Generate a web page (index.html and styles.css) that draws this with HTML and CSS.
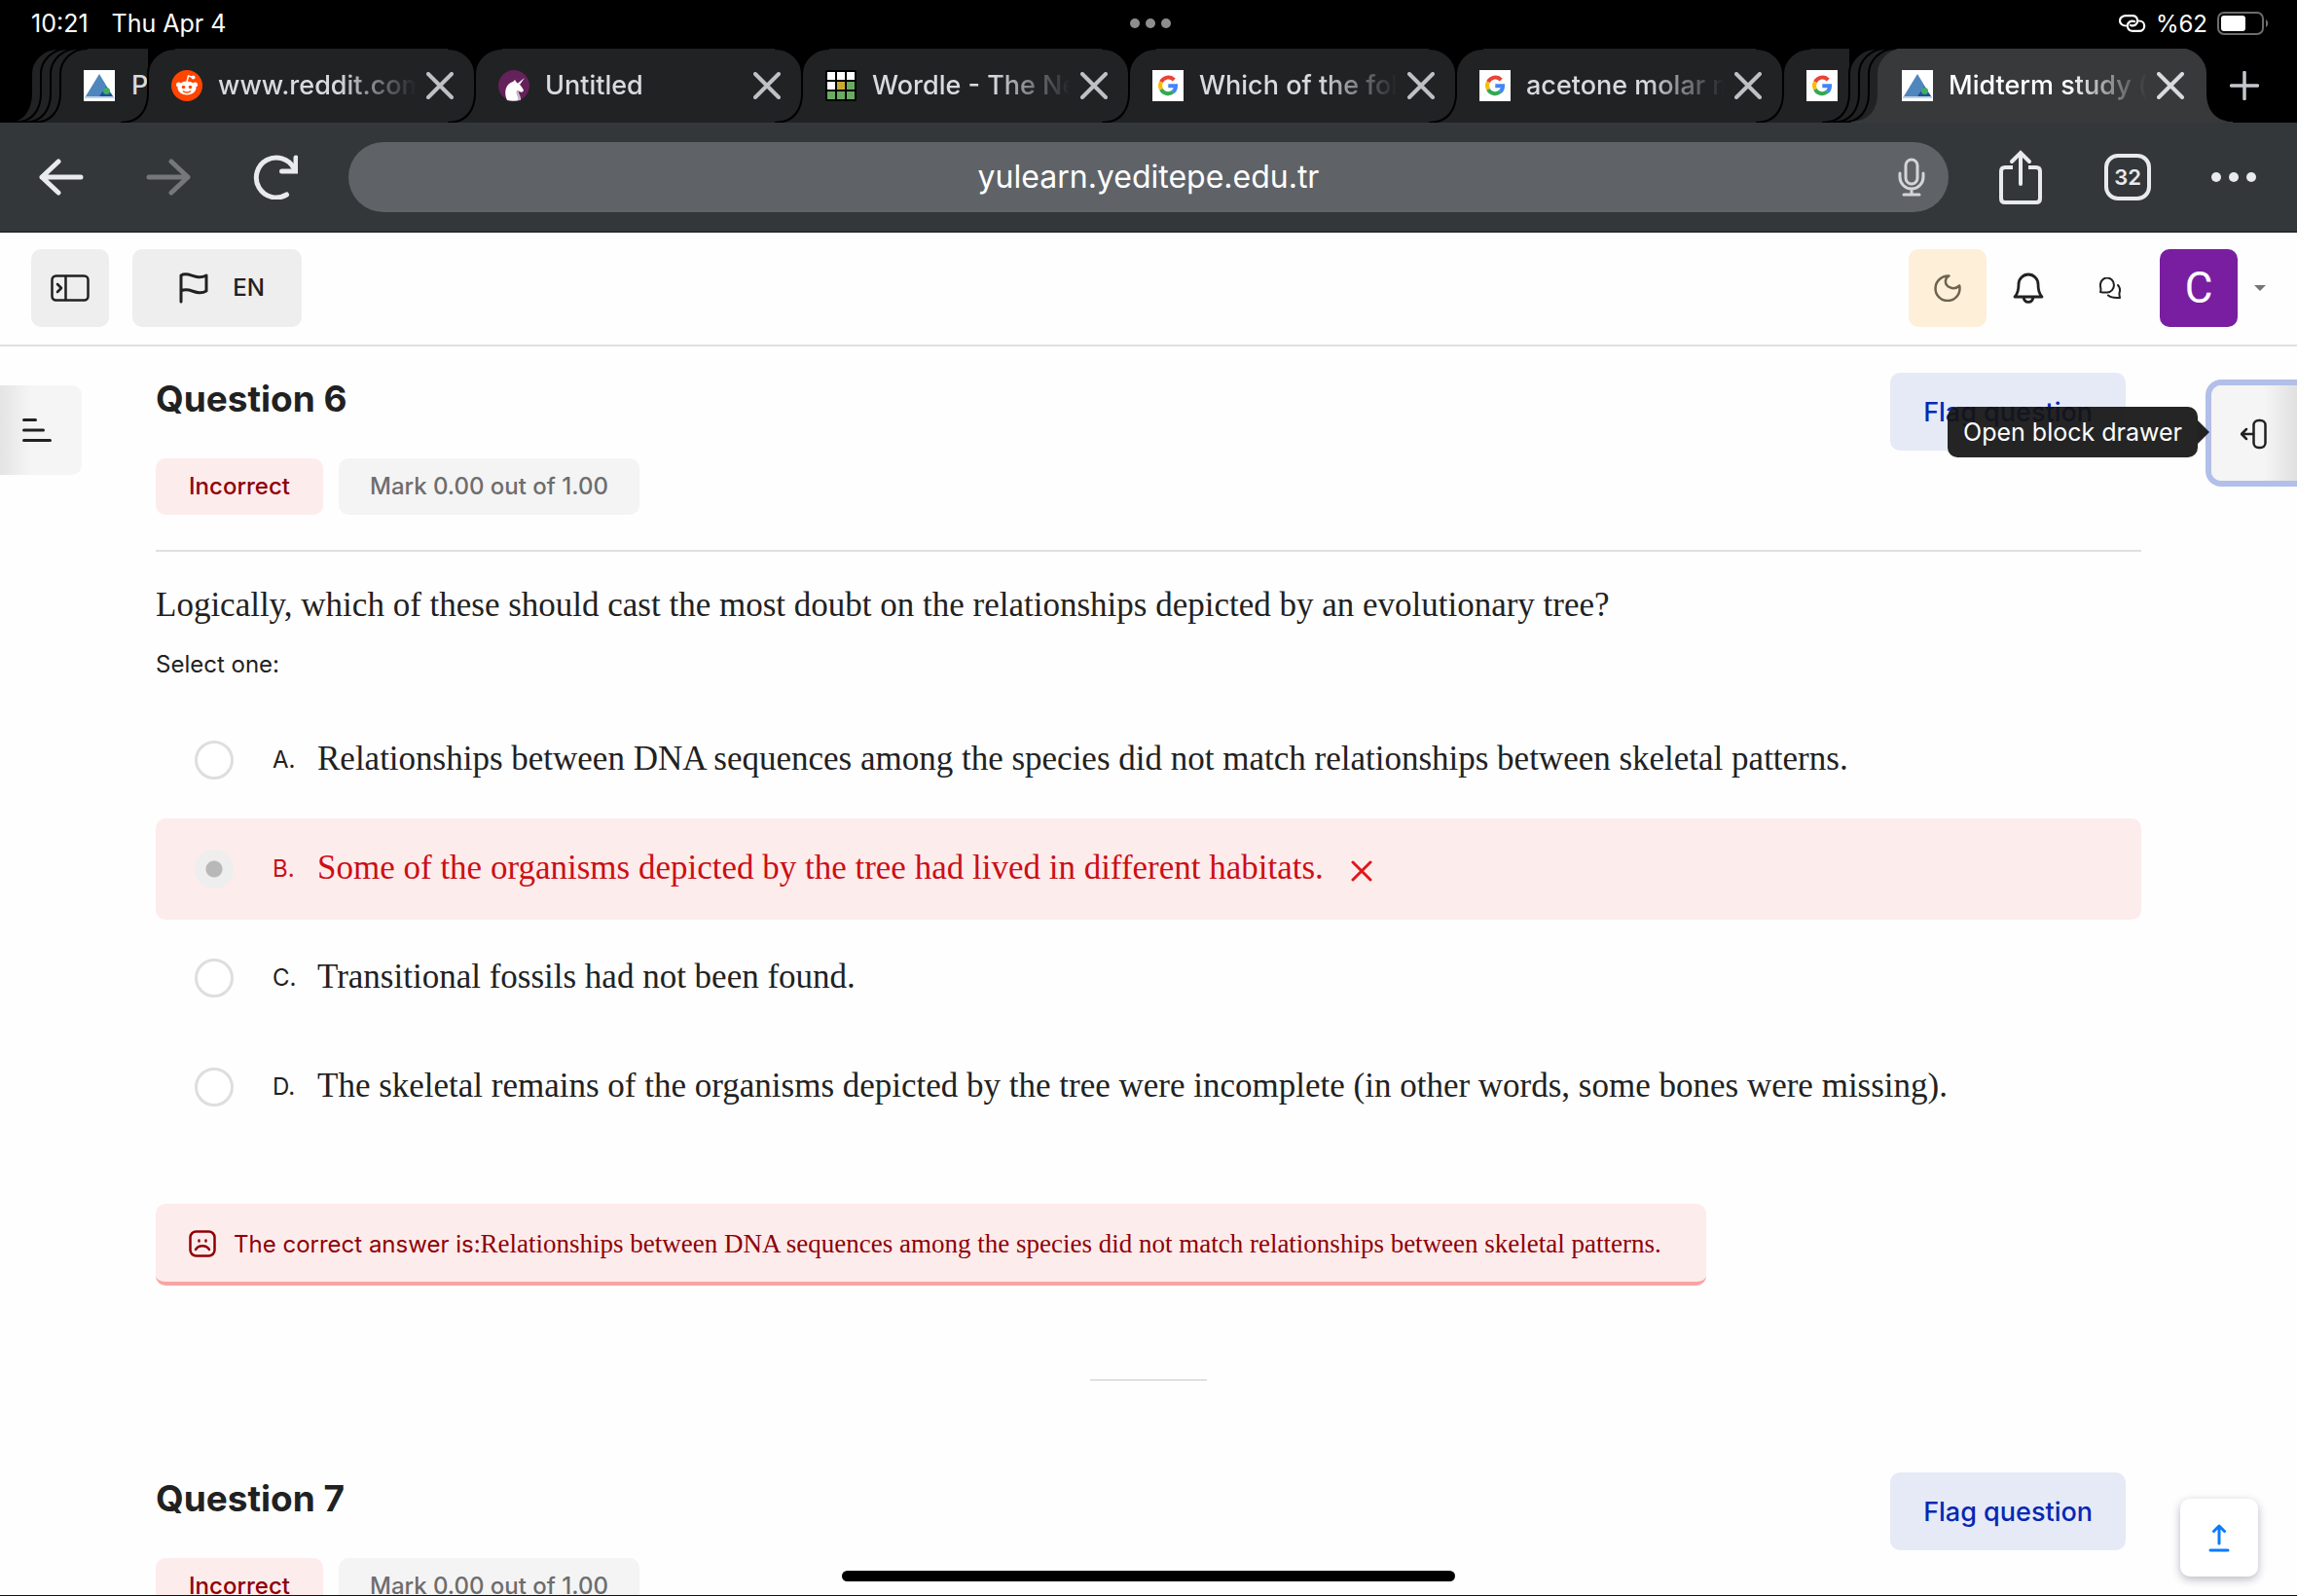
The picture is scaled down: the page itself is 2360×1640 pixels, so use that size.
FILE: index.html
```html
<!DOCTYPE html>
<html lang="en">
<head>
<meta charset="utf-8">
<meta name="viewport" content="width=device-width, initial-scale=1">
<title>Midterm study</title>
<link rel="stylesheet" href="styles.css">
</head>
<body>
<svg class="defs" aria-hidden="true">
  <symbol id="cap" viewBox="0 0 56 76"><path class="cap-fill" d="M0 76C20 76 28 62 28 46V26C28 12 40 0 56 0V76Z"/><path class="cap-line" d="M0 76C20 76 28 62 28 46V26C28 12 40 0 56 0" fill="none"/></symbol>
  <symbol id="i-close" viewBox="0 0 28 28"><path d="M2 2l24 24M26 2L2 26" fill="none" stroke="currentColor" stroke-width="4" stroke-linecap="round"/></symbol>
  <symbol id="i-google" viewBox="0 0 32 32"><rect width="32" height="32" fill="#fff"/><g fill="none" stroke-width="4"><path d="M22.3 10.2A8 8 0 0 0 9 12.3" stroke="#ea4335"/><path d="M9 12.3a8 8 0 0 0 0 7.6" stroke="#fbbc05"/><path d="M9 19.9a8 8 0 0 0 12.2 2.4" stroke="#34a853"/><path d="M16.3 16.2H24c0 2.600-1 4.700-2.800 6.200" stroke="#4285f4"/></g></symbol>
  <symbol id="i-moodle" viewBox="0 0 32 32"><rect width="32" height="32" fill="#fff"/><path d="M16 4L30 27H2z" fill="#4f86bd"/><path d="M23 17l7 10H16z" fill="#1d4f96"/><circle cx="23.500" cy="21.500" r="3.500" fill="#3fae63"/><path d="M1 28h30" stroke="#bcd3ea" stroke-width="2"/></symbol>
</svg>

<header class="browser">
  <div class="status">
    <div class="status-left"><span>10:21</span><span>Thu Apr 4</span></div>
    <svg class="status-dots" viewBox="0 0 42 10" fill="#8e8e8e"><circle cx="5" cy="5" r="5"/><circle cx="21" cy="5" r="5"/><circle cx="37" cy="5" r="5"/></svg>
    <div class="status-right">
      <svg class="link-icon" viewBox="0 0 28 18" fill="none" stroke="#fff" stroke-width="2.200" stroke-linecap="round"><path d="M7 11.500a6 5.200 0 0 1 0-10.400h7a5.200 5.200 0 0 1 3 9.400c-1.500 1-3.500 1-5 .4" /><path d="M21 6.500a5.200 5.200 0 0 1 0 10.400h-7a5.200 5.200 0 0 1-3-9.400c1.500-1 3.500-1 5-.4"/></svg>
      <span>%62</span>
      <svg class="battery" viewBox="0 0 53 24"><rect x="1" y="1" width="46" height="22" rx="6" fill="none" stroke="#6c6c6c" stroke-width="2"/><rect x="4" y="4" width="25" height="16" rx="3" fill="#fff"/><path d="M50 8c3 1.500 3 6.500 0 8z" fill="#6c6c6c"/></svg>
    </div>
  </div>

  <nav class="tabs" aria-label="Tabs">
    <div class="tab sliver"><svg class="cap"><use href="#cap"/></svg></div>
    <div class="tab sliver"><svg class="cap"><use href="#cap"/></svg></div>
    <div class="tab sliver"><svg class="cap"><use href="#cap"/></svg></div>
    <div class="tab cut"><svg class="cap"><use href="#cap"/></svg><svg class="favicon"><use href="#i-moodle"/></svg><span class="tab-title">P</span></div>
    <div class="tab full"><svg class="cap"><use href="#cap"/></svg><svg class="cap end"><use href="#cap"/></svg>
      <svg class="favicon" viewBox="0 0 32 32"><circle cx="16" cy="16" r="16" fill="#ff4500"/><circle cx="7.500" cy="15" r="2.500" fill="#fff"/><circle cx="24.500" cy="15" r="2.500" fill="#fff"/><ellipse cx="16" cy="18.500" rx="9.500" ry="7" fill="#fff"/><path d="M16 12l1.500-6 5 1.500" fill="none" stroke="#fff" stroke-width="1.500"/><circle cx="22.500" cy="7.500" r="2" fill="#fff"/><circle cx="12.500" cy="17.500" r="1.800" fill="#ff4500"/><circle cx="19.500" cy="17.500" r="1.800" fill="#ff4500"/><path d="M12 21.500c2 2 6 2 8 0" fill="none" stroke="#ff4500" stroke-width="1.300"/></svg>
      <span class="tab-title">www.reddit.com</span><button class="tab-close" aria-label="Close tab"><svg><use href="#i-close"/></svg></button></div>
    <div class="tab full"><svg class="cap"><use href="#cap"/></svg><svg class="cap end"><use href="#cap"/></svg>
      <svg class="favicon" viewBox="0 0 32 32"><circle cx="16" cy="16" r="16" fill="#64215a"/><path d="M9 31C5 22 8 14 15 12l2-2 2 3c3 1 6 5 7 8-1 2-3 2-4 1l-3-1c0 3 3 5 3 10-4 1-9 1-13 0z" fill="#fff"/><path d="M20 13.500L27 8l-5 7z" fill="#fff"/><path d="M19 21c-2 3 2 6 1 10h3c1-3-2-6-2-9z" fill="#cbb5c8"/></svg>
      <span class="tab-title">Untitled</span><button class="tab-close" aria-label="Close tab"><svg><use href="#i-close"/></svg></button></div>
    <div class="tab full"><svg class="cap"><use href="#cap"/></svg><svg class="cap end"><use href="#cap"/></svg>
      <svg class="favicon" viewBox="0 0 32 32"><rect width="32" height="32" rx="2" fill="#000"/><g fill="#fff"><rect x="2" y="2" width="8" height="8"/><rect x="12" y="2" width="8" height="8"/><rect x="22" y="2" width="8" height="8"/><rect x="2" y="12" width="8" height="8"/></g><rect x="12" y="12" width="8" height="8" fill="#c9a936"/><g fill="#6aaa64"><rect x="22" y="12" width="8" height="8"/><rect x="2" y="22" width="8" height="8"/><rect x="12" y="22" width="8" height="8"/><rect x="22" y="22" width="8" height="8"/></g></svg>
      <span class="tab-title">Wordle - The New York</span><button class="tab-close" aria-label="Close tab"><svg><use href="#i-close"/></svg></button></div>
    <div class="tab full"><svg class="cap"><use href="#cap"/></svg><svg class="cap end"><use href="#cap"/></svg><svg class="favicon"><use href="#i-google"/></svg><span class="tab-title">Which of the following</span><button class="tab-close" aria-label="Close tab"><svg><use href="#i-close"/></svg></button></div>
    <div class="tab full"><svg class="cap"><use href="#cap"/></svg><svg class="cap end"><use href="#cap"/></svg><svg class="favicon"><use href="#i-google"/></svg><span class="tab-title">acetone molar mass</span><button class="tab-close" aria-label="Close tab"><svg><use href="#i-close"/></svg></button></div>
    <div class="tab short"><svg class="cap"><use href="#cap"/></svg><svg class="favicon"><use href="#i-google"/></svg></div>
    <div class="tab sliver"><svg class="cap"><use href="#cap"/></svg></div>
    <div class="tab sliver"><svg class="cap"><use href="#cap"/></svg></div>
    <div class="tab sliver"><svg class="cap"><use href="#cap"/></svg></div>
    <div class="tab full active"><svg class="cap"><use href="#cap"/></svg><svg class="cap end"><use href="#cap"/></svg><svg class="favicon"><use href="#i-moodle"/></svg><span class="tab-title">Midterm study (page 2)</span><button class="tab-close" aria-label="Close tab"><svg><use href="#i-close"/></svg></button></div>
    <button class="new-tab" aria-label="New tab"><svg viewBox="0 0 30 30"><path d="M15 1.500v27M1.500 15h27" stroke="#c3c8ce" stroke-width="3.500" stroke-linecap="round"/></svg></button>
  </nav>

  <div class="toolbar">
    <button aria-label="Back"><svg viewBox="0 0 46 38" width="46" height="38" fill="none" stroke="#e8eaed" stroke-width="5" stroke-linecap="round" stroke-linejoin="round"><path d="M43 19H3M20 3L3 19l17 16"/></svg></button>
    <button aria-label="Forward"><svg viewBox="0 0 46 38" width="46" height="38" fill="none" stroke="#75777a" stroke-width="5" stroke-linecap="round" stroke-linejoin="round"><path d="M3 19h40M26 3l17 16-17 16"/></svg></button>
    <button aria-label="Reload"><svg viewBox="0 0 46 46" width="46" height="46" fill="none" stroke="#e8eaed" stroke-width="5" stroke-linecap="round"><path d="M34.500 41A20.500 20.500 0 1 1 42 14"/><path d="M44 3v14H29.500"/></svg></button>
    <div class="omnibox">
      <input type="text" value="yulearn.yeditepe.edu.tr" aria-label="Address">
      <button class="mic" aria-label="Voice search"><svg viewBox="0 0 28 40" width="28" height="40" fill="none" stroke="#d3d5d8" stroke-width="3" stroke-linecap="round"><rect x="8" y="2" width="12" height="25" rx="6"/><path d="M2 16v4a12 12 0 0 0 24 0v-4M14 32v6M6 38h16"/></svg></button>
    </div>
    <button aria-label="Share"><svg class="share" viewBox="0 0 44 56" width="44" height="56" fill="none" stroke="#e8eaed" stroke-width="4" stroke-linecap="round"><path d="M14 18H6q-4 0-4 4v28q0 4 4 4h32q4 0 4-4V22q0-4-4-4h-8" stroke-linecap="butt"/><path d="M22 35V4M13 12l9-9 9 9"/></svg></button>
    <button class="tab-count" aria-label="Open tabs"><span>32</span></button>
    <button aria-label="Menu"><svg viewBox="0 0 46 12" width="46" height="12" fill="#e8eaed"><circle cx="5" cy="6" r="5"/><circle cx="23" cy="6" r="5"/><circle cx="41" cy="6" r="5"/></svg></button>
  </div>
</header>

<div class="page">
  <header class="site-bar">
    <button class="tile" aria-label="Toggle sidebar"><svg viewBox="0 0 40 28" width="40" height="28" fill="none" stroke="#212121" stroke-width="2.500" stroke-linejoin="round" stroke-linecap="round"><rect x="1.500" y="1.500" width="37" height="25" rx="4"/><path d="M15.500 2v24M7 10l4 4-4 4"/></svg></button>
    <button class="tile lang"><svg viewBox="0 0 30 34" width="30" height="34" fill="none" stroke="#212121" stroke-width="3" stroke-linecap="round" stroke-linejoin="round"><path d="M2 31V4c8-5 15 6 26 0v16c-10 6-17-5-26 0"/></svg><span>EN</span></button>
    <div class="site-tools">
      <button class="tile moon" aria-label="Dark mode"><svg viewBox="0 0 28 28" width="28" height="28" fill="none" stroke="#6f634f" stroke-width="2.500" stroke-linejoin="round"><path d="M15.500 1.500C8 1 1.500 7 1.500 14.500a12.500 12.500 0 0 0 25 0c0-1.200 0-2-.3-3-5.700 5.500-15.200 1.500-14.200-5.500.3-1.800 1.700-3.500 3.500-4.500z"/></svg></button>
      <button class="plain bell" aria-label="Notifications"><svg viewBox="0 0 32 32" width="32" height="32" fill="none" stroke="#212121" stroke-width="2.800" stroke-linejoin="round"><path d="M2 25c3-3 4-6 4-13a10 10 0 0 1 20 0c0 7 1 10 4 13zM11 25.500c1 6.500 9 6.500 10 0"/></svg></button>
      <button class="plain chat" aria-label="Messages"><svg viewBox="0 0 22 22" width="22" height="22" fill="none" stroke="#212121" stroke-width="2" stroke-linejoin="round" stroke-linecap="round"><path d="M1 15c1-2 .3-3 0-6a7 7.500 0 1 1 7 6.500c-3 0-4 .3-7-.5zM19 8c2 2 2.500 5 1.500 8-.3 1 0 2 .5 5-4-.2-8 .8-12-2.500"/></svg></button>
      <button class="avatar" aria-label="User menu">C</button>
      <svg class="caret" viewBox="0 0 12 6" width="12" height="6"><path d="M0 0h12L6 6z" fill="#757575"/></svg>
    </div>
  </header>

  <main class="content">
    <article class="question">
      <header class="q-head">
        <div>
          <h2>Question 6</h2>
          <div class="pills"><span class="pill bad">Incorrect</span><span class="pill">Mark 0.00 out of 1.00</span></div>
        </div>
        <button class="flag">Flag question</button>
      </header>
      <p class="q-text">Logically, which of these should cast the most doubt on the relationships depicted by an evolutionary tree?</p>
      <fieldset class="answers">
        <legend>Select one:</legend>
        <label class="answer"><input type="radio" name="q6" disabled><span class="letter">A.</span><span class="answer-text">Relationships between DNA sequences among the species did not match relationships between skeletal patterns.</span></label>
        <label class="answer wrong"><input type="radio" name="q6" checked disabled><span class="letter">B.</span><span class="answer-text">Some of the organisms depicted by the tree had lived in different habitats.</span><svg class="cross" viewBox="0 0 22 22" width="22" height="22"><path d="M2 2l18 18M20 2L2 20" stroke="#e0161c" stroke-width="3" stroke-linecap="round"/></svg></label>
        <label class="answer"><input type="radio" name="q6" disabled><span class="letter">C.</span><span class="answer-text">Transitional fossils had not been found.</span></label>
        <label class="answer"><input type="radio" name="q6" disabled><span class="letter">D.</span><span class="answer-text">The skeletal remains of the organisms depicted by the tree were incomplete (in other words, some bones were missing).</span></label>
      </fieldset>
      <div class="feedback">
        <svg viewBox="0 0 28 28" width="28" height="28" fill="none" stroke="#8f0005" stroke-width="2.500" stroke-linecap="round"><rect x="1.500" y="1.500" width="25" height="25" rx="6"/><path d="M7 20c3-5 11-5 14 0M10.500 10.500v1M17.500 10.500v1"/></svg>
        <p><span>The correct answer is:</span><span class="serif">Relationships between DNA sequences among the species did not match relationships between skeletal patterns.</span></p>
      </div>
    </article>
    <hr class="divider">
    <article class="question">
      <header class="q-head">
        <div>
          <h2>Question 7</h2>
          <div class="pills"><span class="pill bad">Incorrect</span><span class="pill">Mark 0.00 out of 1.00</span></div>
        </div>
        <button class="flag">Flag question</button>
      </header>
    </article>
  </main>

  <button class="drawer left" aria-label="Open course index"><svg viewBox="0 0 30 26" width="30" height="26" stroke="#212121" stroke-width="3" stroke-linecap="round"><path d="M1.500 2.500h12M1.500 13h20M1.500 23.500h27"/></svg></button>
  <button class="drawer right" aria-label="Open block drawer"><svg viewBox="0 0 28 32" width="28" height="32" fill="none" stroke="#212121" stroke-width="2.500" stroke-linecap="round" stroke-linejoin="round"><rect x="13.500" y="2" width="12" height="28" rx="5"/><path d="M13 16H2M6 11l-5 5 5 5"/></svg></button>
  <div class="tooltip" role="tooltip">Open block drawer</div>
  <button class="to-top" aria-label="Back to top"><svg viewBox="0 0 22 30" width="22" height="30" fill="none" stroke="#0a7cff" stroke-width="3" stroke-linecap="round" stroke-linejoin="round"><path d="M11 21V3M5.500 8.500L11 3l5.500 5.500M2 28h18"/></svg></button>
  <div class="home-bar"></div>
</div>
</body>
</html>
```
FILE: styles.css
```css
* { box-sizing: border-box; }
body {
  margin: 0;
  height: 100vh;
  display: flex;
  flex-direction: column;
  overflow: hidden;
  background: #fefefe;
  color: #212121;
  font-family: Inter, "Liberation Sans", sans-serif;
  font-size: 24px;
}
button {
  margin: 0;
  padding: 0;
  border: 0;
  background: none;
  color: inherit;
  font: inherit;
  display: flex;
  align-items: center;
  justify-content: center;
}
svg { display: block; flex: none; }
h2, p { margin: 0; }
.defs { position: absolute; width: 0; height: 0; }

/* Browser chrome */
.browser { background: #000; color: #fff; }
.status {
  height: 50px;
  padding: 0 29px 2px 32px;
  display: grid;
  grid-template-columns: 1fr auto 1fr;
  align-items: center;
}
.status-left { display: flex; gap: 24px; font-size: 25px; }
.status-dots { width: 42px; height: 10px; }
.status-right { display: flex; justify-content: flex-end; align-items: center; gap: 10px; }
.link-icon { width: 28px; height: 18px; }
.battery { width: 53px; height: 24px; }

.tabs { display: flex; height: 76px; padding-left: 32px; overflow: hidden; }
.tab {
  position: relative;
  display: flex;
  align-items: center;
  flex: none;
  color: #d8dade;
  --tab: #212224;
  --edge: #000;
}
.tab::before {
  content: "";
  position: absolute;
  inset: 0 27px;
  background: var(--tab);
}
.tab > * { position: relative; }
.tab > .cap { position: absolute; left: -28px; top: 0; width: 56px; height: 76px; }
.tab > .cap.end { left: auto; right: -28px; transform: scaleX(-1); }
.cap-fill { fill: var(--tab); }
.cap-line { stroke: var(--edge); stroke-width: 2; }
.sliver { width: 10px; }
.sliver::before { display: none; }
.cut { width: 90px; padding-left: 24px; gap: 17px; }
.cut::before, .short::before { right: 0; }
.cut .tab-title { width: 24px; flex: none; }
.short { width: 68px; padding-left: 24px; }
.full { flex: 1 1 0; min-width: 0; padding: 0 22px 0 24px; gap: 16px; }
.active { --tab: #38393b; --edge: #38393b; color: #fff; }
.favicon { width: 32px; height: 32px; }
.tab-title {
  flex: 1;
  overflow: hidden;
  white-space: nowrap;
  font-size: 27px;
  font-weight: 500;
  line-height: 36px;
}
.full .tab-title { margin-right: -6px; mask-image: linear-gradient(to left, transparent 0, #000 80px); }
.tab-close { color: #bdc1c6; }
.tab-close svg { width: 28px; height: 28px; }
.active .tab-close { color: #d8dade; }
.new-tab { flex: none; width: 94px; padding-right: 14px; }
.new-tab svg { width: 30px; height: 30px; }

.toolbar {
  height: 113px;
  display: flex;
  align-items: center;
  gap: 64px;
  padding: 0 42px 0 40px;
  background: #33373a;
  border-bottom: 1px solid #15171a;
}
.omnibox {
  flex: 1;
  height: 72px;
  margin: 0 -12px;
  display: flex;
  align-items: center;
  padding: 0 24px 0 52px;
  border-radius: 36px;
  background: #5f6368;
}
.omnibox input {
  flex: 1;
  min-width: 0;
  padding: 0;
  border: 0;
  background: none;
  color: #fff;
  text-align: center;
  font: 400 32px/44px Inter, "Liberation Sans", sans-serif;
}
.tab-count {
  width: 48px;
  height: 48px;
  margin-right: -2px;
  border: 4px solid #e8eaed;
  border-radius: 14px;
  color: #e8eaed;
  font-size: 22px;
  font-weight: 600;
}

/* Site */
.page { position: relative; flex: 1; min-height: 0; overflow: hidden; border-bottom: 1px solid #111; }
.site-bar {
  height: 117px;
  padding: 0 32px 2px;
  display: flex;
  align-items: center;
  gap: 24px;
  border-bottom: 2px solid #e0e0e0;
}
.tile { width: 80px; height: 80px; border-radius: 10px; background: #eee; }
.lang { width: 174px; padding-left: 10px; gap: 25px; font-weight: 500; }
.site-tools { margin-left: auto; display: flex; align-items: center; }
.moon { background: #feefd8; }
.plain { width: 80px; height: 80px; }
.bell { width: 86px; }
.chat { width: 82px; margin-right: 10px; }
.avatar {
  width: 80px;
  height: 80px;
  border-radius: 10px;
  background: #7a1ea1;
  color: #fff;
  font-family: Roboto, "Liberation Sans", sans-serif;
  font-size: 44px;
}
.caret { margin: 0 0 0 17px; }

.content { padding: 27px 160px 0; }
.q-head {
  display: flex;
  justify-content: space-between;
  align-items: flex-start;
  padding-bottom: 36px;
  border-bottom: 2px solid #e0e0e0;
}
h2 { font-size: 37px; line-height: 54px; font-weight: 700; }
.pills { display: flex; gap: 16px; margin-top: 34px; }
.pill {
  padding: 0 32px;
  border-radius: 10px;
  background: #f4f4f4;
  color: #6d6d6d;
  line-height: 58px;
  font-weight: 500;
}
.bad { min-width: 172px; text-align: center; background: #fdecec; color: #8f0005; }
.flag {
  height: 80px;
  margin-right: 16px;
  padding: 0 34px;
  border-radius: 10px;
  background: #e6eaf6;
  color: #0528b4;
  font-size: 27px;
  font-weight: 500;
}
.q-text, .answer-text, .serif {
  font-family: Palatino, "Palatino Linotype", "Liberation Serif", serif;
}
.q-text { margin-top: 31px; font-size: 35px; line-height: 48px; }
.answers { margin: 19px 0 0; padding: 0; border: 0; display: flex; flex-direction: column; gap: 8px; }
.answers legend { padding: 0; margin-bottom: 28px; line-height: 36px; }
.answer {
  height: 104px;
  padding: 0 40px;
  display: flex;
  align-items: center;
  border-radius: 10px;
}
.answer input {
  appearance: none;
  flex: none;
  width: 40px;
  height: 40px;
  margin: 0 40px 0 0;
  border: 3px solid #dedede;
  border-radius: 50%;
  background: #fff;
}
.answer input:checked { border-color: #eee; background: radial-gradient(circle, #b8b8b8 8px, #eee 9px); }
.letter { width: 46px; line-height: 40px; }
.answer-text { padding-bottom: 2px; font-size: 35px; line-height: 48px; }
.wrong { background: #fdecec; color: #cc0f14; }
.cross { margin: 4px 0 0 28px; }
.feedback {
  width: fit-content;
  height: 84px;
  margin-top: 68px;
  padding: 2px 46px 0 34px;
  display: flex;
  align-items: center;
  gap: 18px;
  border-radius: 10px;
  border-bottom: 4px solid #fba3a3;
  background: #fdecec;
  color: #8f0005;
}
.feedback .serif { font-size: 27px; }
.divider { width: 120px; height: 2px; margin: 96px auto 94px; border: 0; background: #e0e0e0; }

/* Overlays */
.drawer { position: absolute; top: 157px; border-radius: 10px; background: #f5f5f5; }
.drawer.left {
  left: 0;
  width: 84px;
  height: 92px;
  padding-right: 8px;
  border-radius: 0 10px 10px 0;
  background: linear-gradient(to right, #e4e4e4, #f5f5f5 32px);
}
.drawer.right {
  right: 0;
  width: 88px;
  height: 98px;
  padding-top: 2px;
  border-radius: 10px 0 0 10px;
  background: linear-gradient(to left, #e0e0e0, #f5f5f5 34px);
  box-shadow: 0 0 0 6px #b2bfe8;
}
.tooltip {
  position: absolute;
  top: 179px;
  right: 102px;
  padding: 0 16px;
  border-radius: 10px;
  background: rgba(20, 20, 20, .93);
  color: #fff;
  font-size: 25px;
  line-height: 52px;
}
.tooltip::after {
  content: "";
  position: absolute;
  left: 100%;
  top: 14px;
  border: 12px solid transparent;
  border-right-width: 0;
  border-left-color: #222;
}
.to-top {
  position: absolute;
  right: 40px;
  bottom: 19px;
  width: 80px;
  height: 80px;
  border-radius: 10px;
  background: #fff;
  box-shadow: 0 3px 10px rgba(30, 20, 60, .3);
}
.home-bar {
  position: absolute;
  left: 50%;
  bottom: 14px;
  width: 630px;
  height: 11px;
  margin-left: -315px;
  border-radius: 6px;
  background: #000;
}
```
